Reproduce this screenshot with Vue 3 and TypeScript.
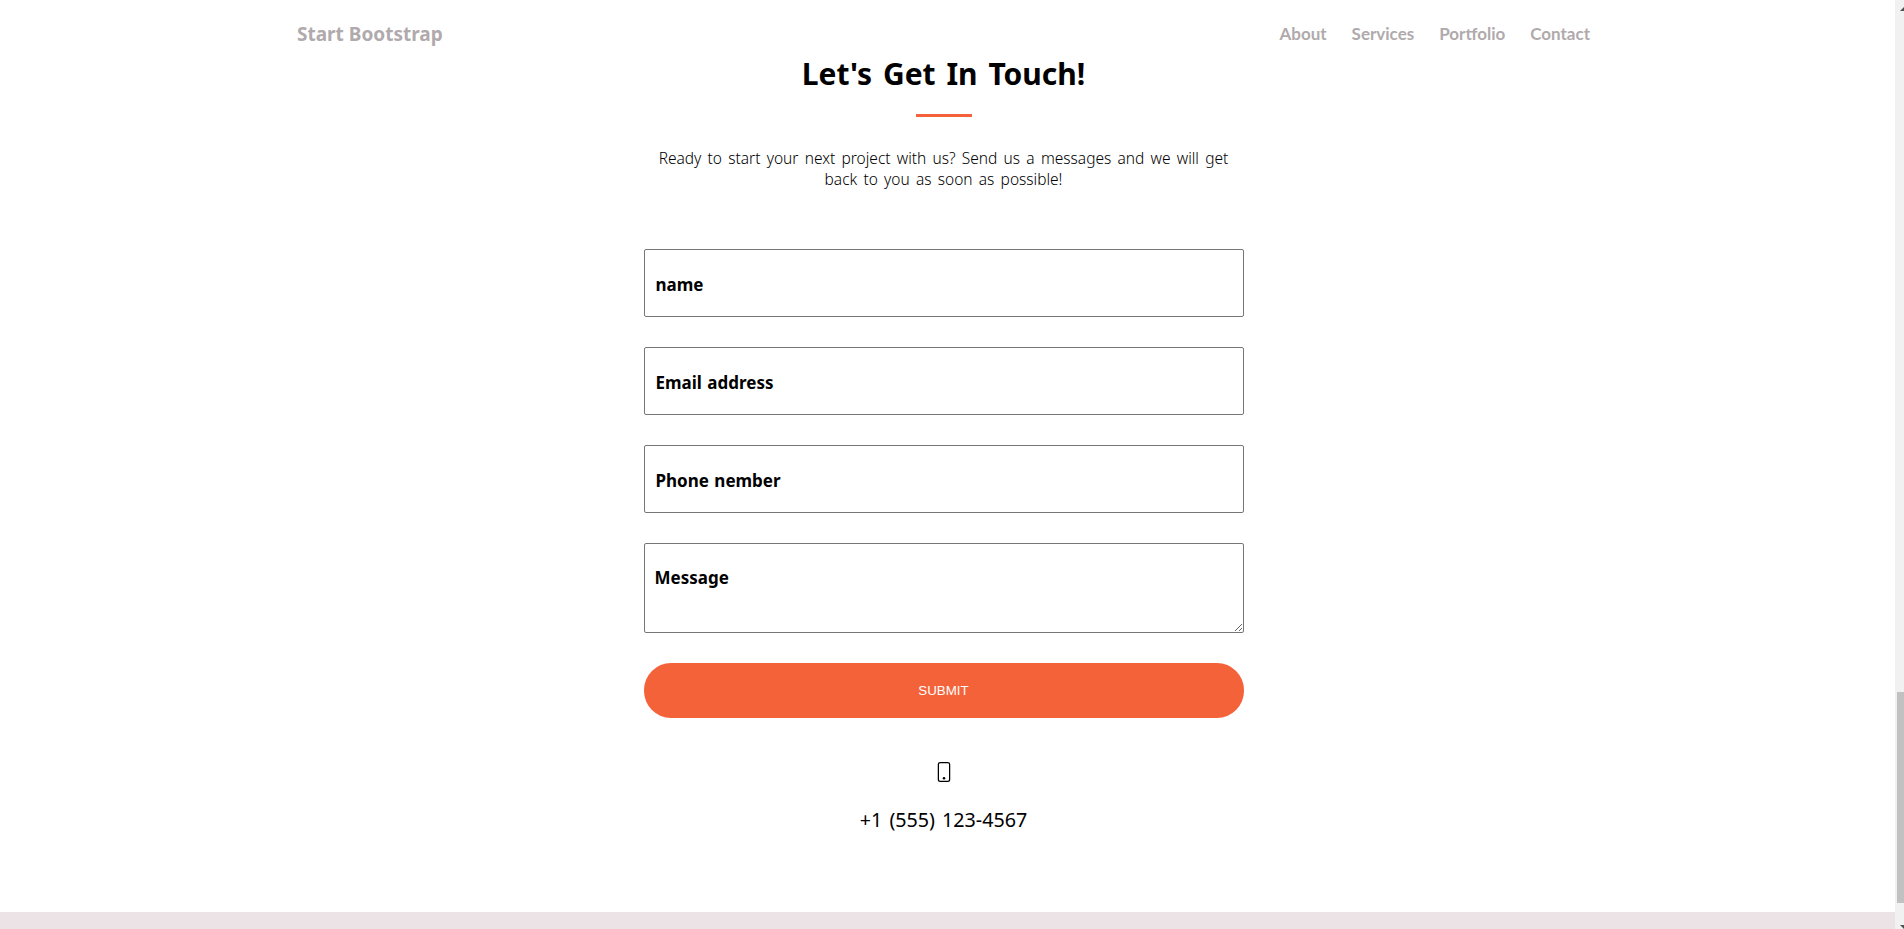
<script setup lang="ts">
const links: string[] = ['About', 'Services', 'Portfolio', 'Contact']
</script>

<template>
  <div class="window">
    <div class="page">
      <nav class="nav">
        <a class="brand" href="#">Start Bootstrap</a>
        <ul class="links">
          <li v-for="l in links" :key="l"><a href="#">{{ l }}</a></li>
        </ul>
      </nav>
      <section class="contact">
        <h2>Let's Get In Touch!</h2>
        <hr class="divider" />
        <p class="lead">Ready to start your next project with us? Send us a messages and we will get back to you as soon as possible!</p>
        <form class="form" @submit.prevent>
          <input class="field" type="text" placeholder="name" />
          <input class="field" type="email" placeholder="Email address" />
          <input class="field" type="tel" placeholder="Phone nember" />
          <textarea class="field area" placeholder="Message"></textarea>
          <button class="submit" type="submit">SUBMIT</button>
        </form>
        <svg class="phone" viewBox="0 0 16 16" fill="currentColor" aria-hidden="true">
          <path d="M11 1a1 1 0 0 1 1 1v12a1 1 0 0 1-1 1H5a1 1 0 0 1-1-1V2a1 1 0 0 1 1-1h6zM5 0a2 2 0 0 0-2 2v12a2 2 0 0 0 2 2h6a2 2 0 0 0 2-2V2a2 2 0 0 0-2-2H5z" />
          <path d="M8 14a1 1 0 1 0 0-2 1 1 0 0 0 0 2z" />
        </svg>
        <div class="tel">+1 (555) 123-4567</div>
      </section>
      <footer class="foot"></footer>
    </div>
    <div class="scrollbar" aria-hidden="true">
      <span class="arrow up"></span>
      <span class="thumb"></span>
      <span class="arrow down"></span>
    </div>
  </div>
</template>

<style>
html, body { margin: 0; height: 100%; overflow: hidden; background: #fff; }
</style>

<style scoped>
.window {
  display: flex;
  height: 929px;
  font-family: "Noto Sans", "Noto Sans CJK KR", sans-serif;
  color: #000;
}
.page {
  flex: 1;
  min-width: 0;
  display: flex;
  flex-direction: column;
  background: #fff;
}
.nav {
  height: 53px;
  padding: 14px 305px 0 297px;
  display: flex;
  justify-content: space-between;
  align-items: center;
  box-sizing: border-box;
  flex: none;
}
.brand {
  font-size: 19px;
  font-weight: 700;
  color: #b0aaac;
  text-decoration: none;
}
.links {
  display: flex;
  gap: 25px;
  list-style: none;
  margin: 0;
  padding: 0;
}
.links a {
  font-family: Lato, sans-serif;
  font-size: 17px;
  font-weight: 700;
  color: #b0aaac;
  text-decoration: none;
}
.contact {
  flex: 1;
  display: flex;
  flex-direction: column;
  align-items: center;
  padding-right: 8px;
}
h2 {
  margin: -1px 0 0;
  font-size: 30px;
  line-height: 44px;
  font-weight: 700;
  word-spacing: 3px;
}
.divider {
  width: 56px;
  height: 3px;
  margin: 18px 0 0;
  border: 0;
  background: #f4623a;
}
.lead {
  width: 576px;
  margin: 31px 0 0;
  text-align: center;
  font-size: 15.5px;
  line-height: 21px;
  font-weight: 300;
  word-spacing: 2.2px;
  color: #000;
}
.form {
  width: 600px;
  margin-top: 59px;
  display: flex;
  flex-direction: column;
  gap: 30px;
}
.field {
  height: 68px;
  padding: 2px 11px 0;
  border: 1px solid #767676;
  border-radius: 2px;
  box-sizing: border-box;
  background: #fff;
  font-family: inherit;
  font-size: 17px;
  font-weight: 700;
  word-spacing: 1px;
  outline: none;
}
.field::placeholder { color: #000; opacity: 1; }
.area {
  height: 90px;
  padding: 22px 10px 0;
  line-height: 24px;
}
.submit {
  height: 55px;
  border: 0;
  border-radius: 27px;
  background: #f4623a;
  color: #fff;
  font-family: "Liberation Sans", Arial, sans-serif;
  font-size: 13.33px;
  padding: 0;
}
.phone {
  width: 20px;
  height: 20px;
  margin-top: 44px;
  flex: none;
}
.tel {
  margin-top: 25px;
  font-size: 19.7px;
  line-height: 26px;
  word-spacing: 2px;
}
.foot {
  height: 17px;
  background: #ebe3e5;
  flex: none;
}
.scrollbar {
  position: relative;
  width: 9px;
  flex: none;
  overflow: hidden;
  background: #f1f1f1;
}
.thumb {
  position: absolute;
  top: 692px;
  left: 2px;
  right: 0;
  height: 211px;
  background: #c1c1c1;
}
.arrow {
  position: absolute;
  left: 5px;
  border-left: 4px solid transparent;
  border-right: 4px solid transparent;
}
.arrow.up { top: 7px; border-bottom: 4px solid #505050; }
.arrow.down { top: 925px; border-top: 4px solid #505050; }
</style>
